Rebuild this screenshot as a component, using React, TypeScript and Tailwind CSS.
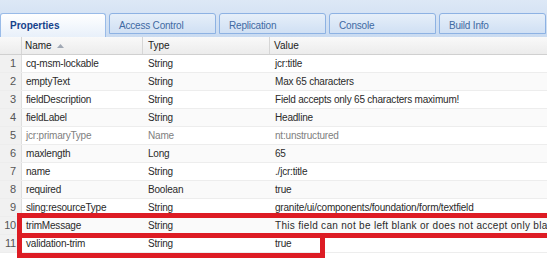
const tabs = ['Properties', 'Access Control', 'Replication', 'Console', 'Build Info'];

const rows = [
  { name: 'cq-msm-lockable', type: 'String', value: 'jcr:title' },
  { name: 'emptyText', type: 'String', value: 'Max 65 characters' },
  { name: 'fieldDescription', type: 'String', value: 'Field accepts only 65 characters maximum!' },
  { name: 'fieldLabel', type: 'String', value: 'Headline' },
  { name: 'jcr:primaryType', type: 'Name', value: 'nt:unstructured', muted: true },
  { name: 'maxlength', type: 'Long', value: '65' },
  { name: 'name', type: 'String', value: './jcr:title' },
  { name: 'required', type: 'Boolean', value: 'true' },
  { name: 'sling:resourceType', type: 'String', value: 'granite/ui/components/foundation/form/textfield' },
  { name: 'trimMessage', type: 'String', value: 'This field can not be left blank or does not accept only blank spaces.', wide: true },
  { name: 'validation-trim', type: 'String', value: 'true' },
];

export default function App() {
  return (
    <div className="relative w-[547px] h-[262px] overflow-hidden bg-white font-['Liberation_Sans',Arial,sans-serif]">
      {/* Tab strip */}
      <div className="h-[37px] bg-gradient-to-b from-[#dde8f6] to-[#c9dbf1] pt-[13px]">
        <div className="flex gap-[3px] h-[22px]">
          {tabs.map((t, i) =>
            i === 0 ? (
              <div
                key={t}
                className="w-[106px] h-[24px] rounded-t-[3px] border border-b-0 border-[#99bbe8] bg-gradient-to-b from-white to-[#e8f0fa] pl-[9px] pt-[4px] text-[10px] font-bold text-[#15428b]"
              >
                {t}
              </div>
            ) : (
              <div
                key={t}
                className="w-[107px] h-[21px] rounded-t-[3px] border border-[#8db2e3] bg-gradient-to-b from-[#e6eff9] to-[#d0e0f4] pl-[9px] pt-[4px] text-[10px] text-[#416aa3] tracking-[-0.2px]"
              >
                {t}
              </div>
            )
          )}
        </div>
      </div>

      {/* Grid */}
      <div className="text-[10px] tracking-[-0.2px] text-[#2a2a2a]">
        <div className="grid grid-cols-[22px_121px_127px_1fr] h-[18px] bg-gradient-to-b from-[#f9f9f9] to-[#ececec] border-b border-[#d0d0d0] text-[#222] tracking-normal">
          <div className="border-r border-[#d6d6d6]" />
          <div className="flex items-center gap-[5px] pl-[3px] border-r border-[#d6d6d6]">
            Name
            <svg width="7" height="4" viewBox="0 0 7 4">
              <path d="M0 4 L3.5 0 L7 4 Z" fill="#a0a8b4" />
            </svg>
          </div>
          <div className="flex items-center pl-[5px] border-r border-[#d6d6d6]">Type</div>
          <div className="flex items-center pl-[4px]">Value</div>
        </div>

        {rows.map((r, i) => (
          <div
            key={r.name}
            className={`grid grid-cols-[22px_121px_127px_1fr] h-[18px] border-b border-[#ededed] ${
              i % 2 === 1 ? 'bg-[#fafafa]' : 'bg-white'
            } ${r.muted ? 'text-[#808080]' : ''}`}
          >
            <div className="flex items-center justify-end pr-[5px] bg-[#f1f1f1] border-r border-[#dedede] text-[#555] text-[11px]">
              {i + 1}
            </div>
            <div className="flex items-center pl-[4px]">{r.name}</div>
            <div className="flex items-center pl-[5px]">{r.type}</div>
            <div
              className={`flex items-center pl-[5px] whitespace-nowrap overflow-hidden ${
                r.wide ? 'tracking-[0.3px]' : ''
              }`}
            >
              {r.value}
            </div>
          </div>
        ))}
      </div>

      {/* Annotation boxes */}
      <div className="absolute left-[17px] top-[213px] w-[540px] h-[25px] border-[5px] border-[#dd1c24]" />
      <div className="absolute left-[17px] top-[233px] w-[308px] h-[25px] border-[5px] border-[#dd1c24]" />
    </div>
  );
}
